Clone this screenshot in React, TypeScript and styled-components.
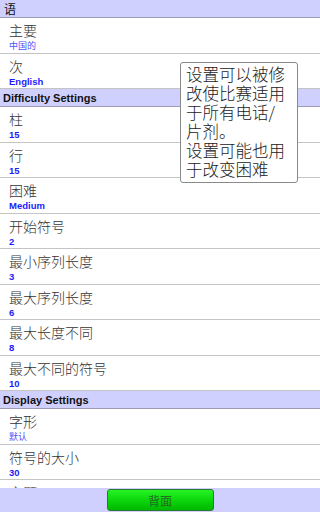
import React from 'react';
import styled, { createGlobalStyle } from 'styled-components';

const GlobalStyle = createGlobalStyle`
    html, body {
        margin: 0;
        padding: 0;
        background: #ffffff;
        font-family: "Liberation Sans", "Noto Sans CJK SC", sans-serif;
    }
`

const Screen = styled.div`
    position: relative;
    width: 320px;
    height: 512px;
    display: flex;
    flex-direction: column;
    overflow: hidden;
    background: #ffffff;
`

const List = styled.div`
    flex: 1;
    overflow: hidden;
    display: flex;
    flex-direction: column;
`

const Header = styled.div<{ $plain?: boolean }>`
    flex: none;
    height: 17px;
    padding-left: ${p => p.$plain ? '4px' : '3px'};
    display: flex;
    align-items: center;
    background: #d0d0ff;
    border-bottom: 1px solid #9c9cb6;
    color: #111111;
    font-size: ${p => p.$plain ? '12px' : '11px'};
    font-weight: ${p => p.$plain ? 'normal' : 'bold'};
    font-family: "Liberation Sans", "Noto Sans CJK SC", sans-serif;
`

const Row = styled.div`
    flex: none;
    box-sizing: border-box;
    height: 35.5px;
    padding: 4px 0 0 9px;
    display: flex;
    flex-direction: column;
    gap: 1px;
    border-bottom: 1px solid #c4c4c4;
`

const Title = styled.div`
    font-family: "Noto Sans CJK SC", sans-serif;
    font-size: 14px;
    line-height: 17px;
    font-weight: 300;
    color: #333333;
`

const Sub = styled.div<{ $cjk?: boolean }>`
    font-family: ${p => p.$cjk ? '"Noto Sans CJK SC", sans-serif' : '"Liberation Sans", sans-serif'};
    font-size: ${p => p.$cjk ? '9px' : '9.5px'};
    font-weight: ${p => p.$cjk ? 'normal' : 'bold'};
    line-height: 12px;
    color: ${p => p.$cjk ? '#5050ff' : '#1c1cff'};
`

const BottomBar = styled.div`
    flex: none;
    height: 24px;
    background: #d0d0ff;
    display: flex;
    justify-content: center;
    align-items: center;
`

const BackButton = styled.button`
    box-sizing: border-box;
    width: 107px;
    height: 22px;
    margin: 0;
    padding: 0;
    border: 1px solid #2b7a2b;
    border-radius: 3px;
    background: linear-gradient(#26f426, #0ad40a 55%, #00b800);
    color: #236b23;
    font-family: "Noto Sans CJK SC", sans-serif;
    font-size: 12px;
`

const Tooltip = styled.div`
    position: absolute;
    left: 180px;
    top: 62px;
    box-sizing: border-box;
    width: 118px;
    padding: 2px 4px 3px 5px;
    background: #ffffff;
    border: 1px solid #8a8a8a;
    border-radius: 3px;
    font-family: "Noto Sans CJK SC", sans-serif;
    font-size: 16.5px;
    line-height: 19px;
    color: #1a1a1a;
    font-weight: 300;
`

type Item = { title: string, value: string, cjk?: boolean }

const language: Item[] = [
    { title: '主要', value: '中国的', cjk: true },
    { title: '次', value: 'English' },
]

const difficulty: Item[] = [
    { title: '柱', value: '15' },
    { title: '行', value: '15' },
    { title: '困难', value: 'Medium' },
    { title: '开始符号', value: '2' },
    { title: '最小序列长度', value: '3' },
    { title: '最大序列长度', value: '6' },
    { title: '最大长度不同', value: '8' },
    { title: '最大不同的符号', value: '10' },
]

const display: Item[] = [
    { title: '字形', value: '默认', cjk: true },
    { title: '符号的大小', value: '30' },
    { title: '主题', value: '' },
]

const Rows = ({ items }: { items: Item[] }) => <>
    {items.map(i => (
        <Row key={i.title}>
            <Title>{i.title}</Title>
            <Sub $cjk={i.cjk}>{i.value}</Sub>
        </Row>
    ))}
</>

export default function App() {
    return <>
        <GlobalStyle />
        <Screen>
            <List>
                <Header $plain>语</Header>
                <Rows items={language} />
                <Header>Difficulty Settings</Header>
                <Rows items={difficulty} />
                <Header>Display Settings</Header>
                <Rows items={display} />
            </List>
            <BottomBar>
                <BackButton>背面</BackButton>
            </BottomBar>
            <Tooltip>
                设置可以被修<br />
                改使比赛适用<br />
                于所有电话/<br />
                片剂。<br />
                设置可能也用<br />
                于改变困难
            </Tooltip>
        </Screen>
    </>
}
